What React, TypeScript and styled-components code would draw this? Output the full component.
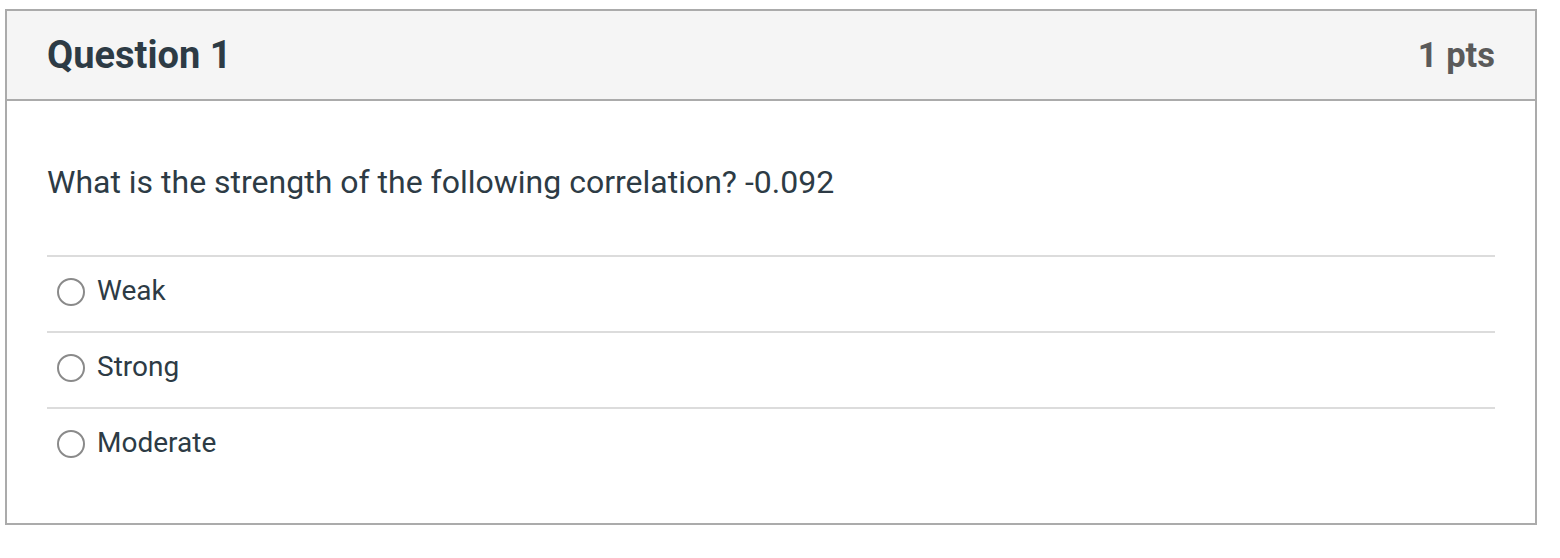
import { FC, useState } from 'react';
import styled, { createGlobalStyle } from 'styled-components';

const GlobalStyle = createGlobalStyle`
    html, body {
        margin: 0;
        padding: 0;
        background: #fff;
    }
    body {
        font-family: Roboto, "Liberation Sans", Arial, sans-serif;
        color: #2d3b45;
    }
`;

const Page = styled.div`
    padding: 9px 23px 33px 5px;
`;
const Card = styled.section`
    width: 1532px;
    box-sizing: border-box;
    border: 2px solid #ababab;
    background: #fff;
`;
const Header = styled.header`
    height: 90px;
    display: flex;
    align-items: center;
    justify-content: space-between;
    box-sizing: border-box;
    padding: 0 40px;
    background: #f5f5f5;
    border-bottom: 2px solid #ababab;
`;
const Title = styled.h2`
    margin: 0;
    font-size: 38px;
    font-weight: 700;
    color: #2d3b45;
`;
const Points = styled.span`
    font-size: 34.5px;
    font-weight: 700;
    color: #5a5a5a;
`;
const Body = styled.div`
    padding: 61px 40px 40px;
`;
const Prompt = styled.p`
    margin: 0 0 53px;
    font-size: 32px;
    line-height: 40px;
    color: #2d3b45;
`;
const Answers = styled.ul`
    list-style: none;
    margin: 0;
    padding: 0;
`;
const Answer = styled.li`
    height: 76px;
    box-sizing: border-box;
    padding: 0 0 4px 10px;
    display: flex;
    align-items: center;
    gap: 12px;
    border-top: 2px solid #dcdcdc;
    cursor: pointer;
`;
const Radio = styled.span<{ $checked: boolean }>`
    width: 24px;
    height: 24px;
    border-radius: 50%;
    border: 2px solid #8a8a8a;
    box-sizing: content-box;
    position: relative;
    flex: none;

    &::after {
        content: '';
        position: absolute;
        inset: 5px;
        border-radius: 50%;
        background: ${p => (p.$checked ? '#2d3b45' : 'transparent')};
    }
`;
const Label = styled.span`
    font-size: 28px;
    color: #2d3b45;
    margin-top: -4px;
`;

const options = ['Weak', 'Strong', 'Moderate'];

const App: FC = () => {
    const [picked, setPicked] = useState<number | null>(null);

    return <Page>
        <GlobalStyle />
        <Card>
            <Header>
                <Title>Question 1</Title>
                <Points>1 pts</Points>
            </Header>
            <Body>
                <Prompt>What is the strength of the following correlation? -0.092</Prompt>
                <Answers>
                    {
                        options.map((v, i) => {
                            return <Answer key={v} onClick={() => setPicked(i)}>
                                <Radio $checked={picked === i} />
                                <Label>{v}</Label>
                            </Answer>
                        })
                    }
                </Answers>
            </Body>
        </Card>
    </Page>
}

export default App;
